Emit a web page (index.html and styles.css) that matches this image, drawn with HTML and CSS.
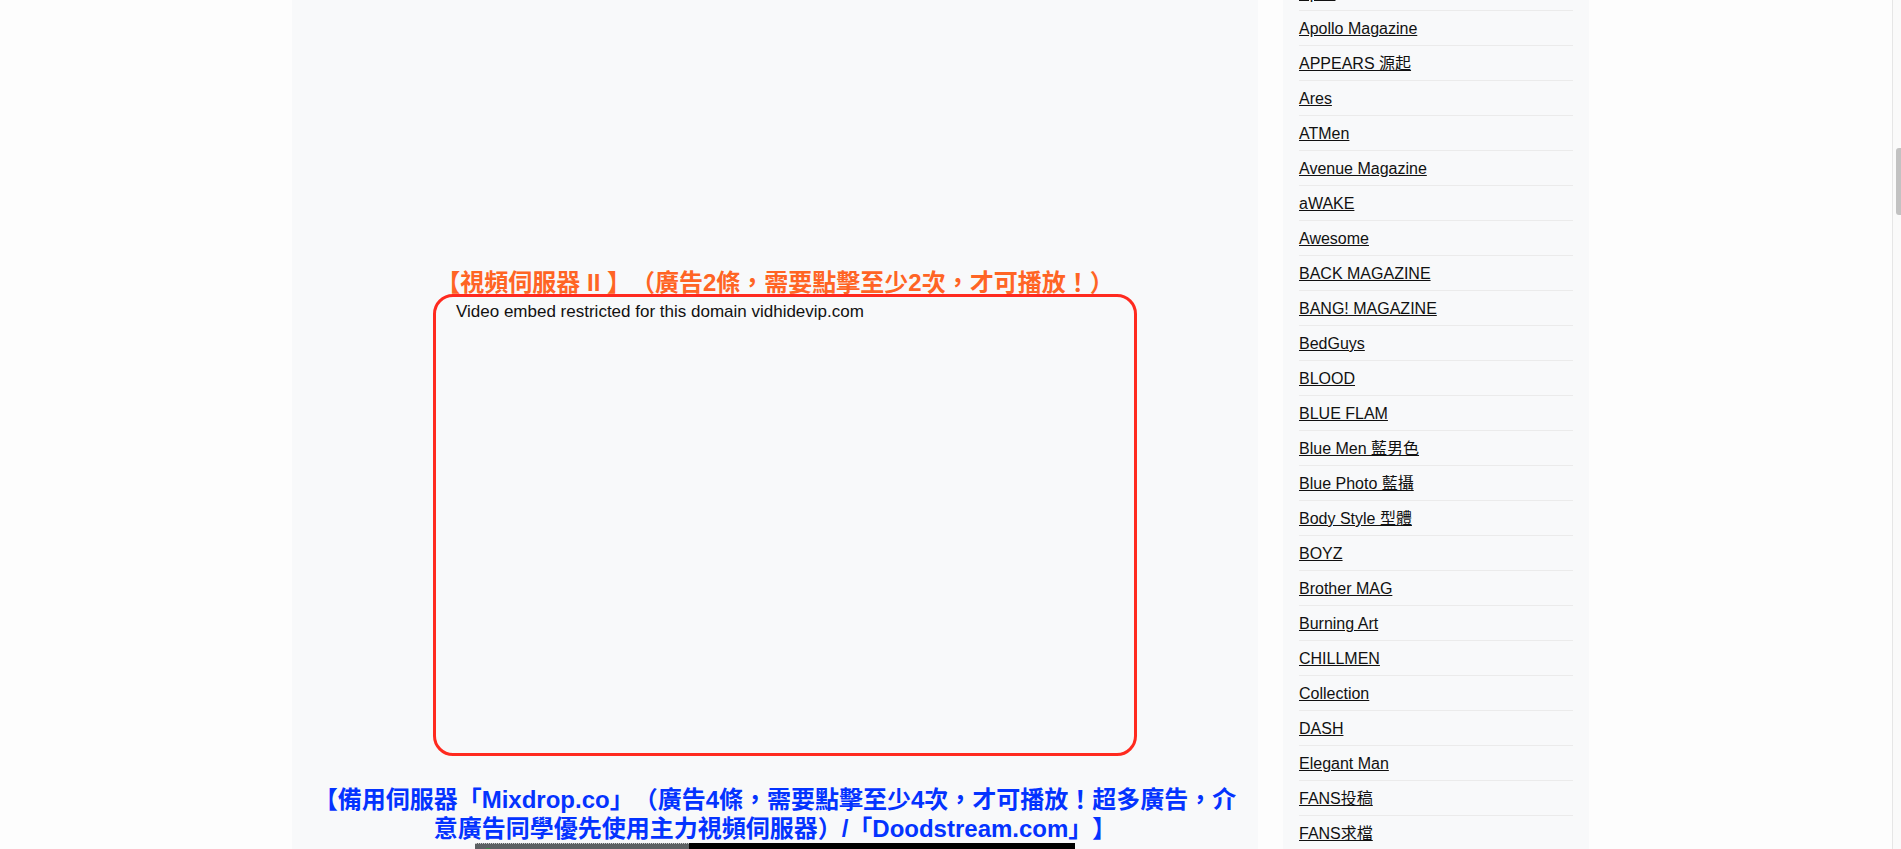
FILE: index.html
```html
<!DOCTYPE html>
<html lang="zh-Hant">
<head>
<meta charset="utf-8">
<title>視頻伺服器</title>
<link rel="stylesheet" href="styles.css">
</head>
<body>
<div class="page">
  <main class="content">
    <h3 class="srv-title srv-orange">【視頻伺服器 II 】（廣告2條，需要點擊至少2次，才可播放！）</h3>
    <div class="embed">
      <p class="embed-msg">Video embed restricted for this domain vidhidevip.com</p>
    </div>
    <h3 class="srv-title srv-blue">【備用伺服器「Mixdrop.co」（廣告4條，需要點擊至少4次，才可播放！超多廣告，介<br>意廣告同學優先使用主力視頻伺服器）/「Doodstream.com」】</h3>
    <div class="player"><div class="player-thumb"><span class="player-dot"></span></div></div>
  </main>
  <aside class="sidebar">
    <ul class="cat-list">
      <li><a href="#">Apex</a></li>
      <li><a href="#">Apollo Magazine</a></li>
      <li><a href="#">APPEARS 源起</a></li>
      <li><a href="#">Ares</a></li>
      <li><a href="#">ATMen</a></li>
      <li><a href="#">Avenue Magazine</a></li>
      <li><a href="#">aWAKE</a></li>
      <li><a href="#">Awesome</a></li>
      <li><a href="#">BACK MAGAZINE</a></li>
      <li><a href="#">BANG! MAGAZINE</a></li>
      <li><a href="#">BedGuys</a></li>
      <li><a href="#">BLOOD</a></li>
      <li><a href="#">BLUE FLAM</a></li>
      <li><a href="#">Blue Men 藍男色</a></li>
      <li><a href="#">Blue Photo 藍攝</a></li>
      <li><a href="#">Body Style 型體</a></li>
      <li><a href="#">BOYZ</a></li>
      <li><a href="#">Brother MAG</a></li>
      <li><a href="#">Burning Art</a></li>
      <li><a href="#">CHILLMEN</a></li>
      <li><a href="#">Collection</a></li>
      <li><a href="#">DASH</a></li>
      <li><a href="#">Elegant Man</a></li>
      <li><a href="#">FANS投稿</a></li>
      <li><a href="#">FANS求檔</a></li>
    </ul>
  </aside>
  <div class="filler"></div>
  <div class="scrollbar"><div class="scrollbar-thumb"></div></div>
</div>
</body>
</html>
```

FILE: styles.css
```css
html, body {
  margin: 0;
  padding: 0;
  height: 849px;
  overflow: hidden;
  background: #fdfdfd;
  font-family: "Liberation Sans", "Noto Sans CJK TC", sans-serif;
  text-spacing-trim: space-all;
}

.page {
  display: flex;
  height: 849px;
  padding-left: 292px;
  overflow: hidden;
}

.content {
  width: 966px;
  flex: none;
  background: #f8f9fa;
  padding-top: 270px;
  box-sizing: border-box;
}

.srv-title {
  margin: 0;
  font-size: 24px;
  font-weight: 700;
  text-align: center;
  font-family: "Liberation Sans", "Noto Sans CJK TC", sans-serif;
  text-spacing-trim: space-all;
}

.srv-orange {
  color: #ff6424;
  line-height: 26px;
  margin-bottom: -2px;
}

.srv-blue {
  color: #0433ff;
  line-height: 29px;
  margin-top: 29px;
  white-space: nowrap;
}

.embed {
  width: 704px;
  height: 462px;
  box-sizing: border-box;
  margin-left: 141px;
  border: 3px solid #ff2a1f;
  border-radius: 20px;
}

.embed-msg {
  margin: 0;
  padding: 5px 0 0 20px;
  font-size: 17px;
  line-height: 20px;
  color: #111;
}

.player {
  width: 600px;
  height: 340px;
  margin: 0 auto;
  background: #000;
  display: flex;
}

.player-thumb {
  width: 214px;
  height: 120px;
  background: #5d6163;
  border-top: 1px dotted #c8c8c8;
  position: relative;
}

.player-dot {
  position: absolute;
  left: 8px;
  top: 4px;
  width: 10px;
  height: 10px;
  border-radius: 50%;
  background: #3c8a4a;
}

.sidebar {
  width: 306px;
  flex: none;
  margin-left: 25px;
  background: #f8f9fa;
  padding: 0 16px;
  box-sizing: border-box;
}

.cat-list {
  list-style: none;
  margin: -24px 0 0;
  padding: 0;
}

.cat-list li {
  padding: 7px 0 5px;
  line-height: 22px;
  font-size: 16px;
  border-bottom: 1px solid #ebebeb;
}

.cat-list a {
  color: #111;
  text-decoration: underline;
}

.filler {
  flex: 1;
}

.scrollbar {
  width: 8px;
  flex: none;
  background: #fafafa;
  border-left: 1px solid #e6e6e6;
  position: relative;
}

.scrollbar-thumb {
  position: absolute;
  left: 3px;
  right: 0;
  top: 148px;
  height: 67px;
  border-radius: 3px 0 0 3px;
  background: #c2c2c2;
}
```
